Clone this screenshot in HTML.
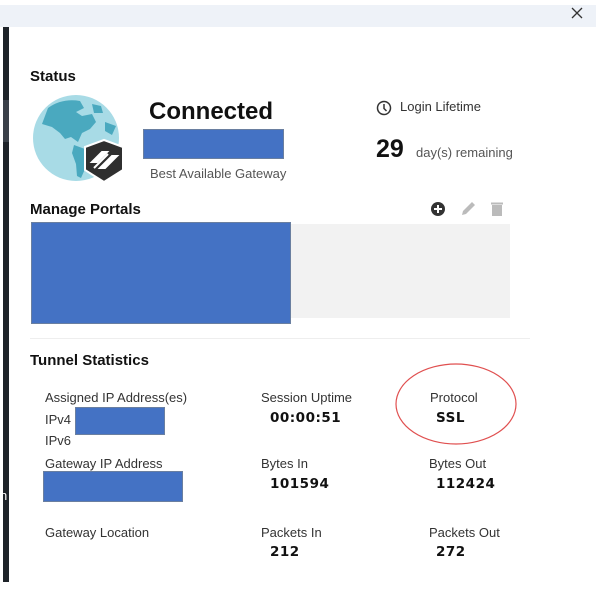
<!DOCTYPE html>
<html><head><meta charset="utf-8">
<style>
html,body{margin:0;padding:0;background:#fff;}
body{width:602px;height:589px;position:relative;overflow:hidden;font-family:"Liberation Sans",sans-serif;color:#222;}
.a{position:absolute;white-space:nowrap;}
.h{font-weight:bold;font-size:15px;color:#111;}
.l{font-size:13px;color:#333;}
.v{font-size:13.5px;font-weight:bold;color:#111;font-family:"DejaVu Sans",sans-serif;letter-spacing:0.5px;}
.blue{position:absolute;background:#4472c4;border:1px solid #6a7fa0;box-sizing:border-box;}
</style></head><body>
<div class="a" style="left:0;top:5px;width:596px;height:22px;background:#eef2f8;"></div>
<svg class="a" style="left:571px;top:7px" width="12" height="12"><path d="M1 1L11 11M11 1L1 11" stroke="#333" stroke-width="1.3"/></svg>
<div class="a" style="left:3px;top:27px;width:6px;height:555px;background:#1e2329;"></div>
<div class="a" style="left:3px;top:100px;width:6px;height:42px;background:#3a4048;"></div>

<div class="a h" style="left:30px;top:68px;">Status</div>
<svg class="a" style="left:30px;top:92px" width="96" height="96" viewBox="0 0 96 96">
<circle cx="46" cy="46" r="43" fill="#a8dbe6"/>
<path d="M18 16 Q32 6 50 9 L54 16 L46 20 L52 24 L62 22 L66 30 L60 37 L52 41 L48 50 L41 45 L35 47 L30 41 L22 35 L12 32 Z" fill="#4aa9bf"/>
<path d="M44 53 L55 57 L59 67 L55 77 L51 86 L47 84 L46 72 L42 61 Z" fill="#4aa9bf"/>
<path d="M62 12 L71 14 L73 21 L64 21 Z" fill="#4aa9bf"/>
<path d="M75 30 L86 34 L82 43 L75 39 Z" fill="#4aa9bf"/>
<path d="M74 48 L93 55 L93 78 L74 90 L55 78 L55 55 Z" fill="#2f2f2f" stroke="#fff" stroke-width="2"/>
<path d="M62 70 L72 60 L77 60 L67 70 Z M70 76 L82 64 L87 64 L75 76 Z M64 76 L78 62" fill="#fff" stroke="#fff" stroke-width="2"/>
</svg>
<div class="a" style="left:149px;top:98px;font-size:24px;font-weight:bold;color:#111;">Connected</div>
<div class="blue" style="left:143px;top:129px;width:141px;height:30px;"></div>
<div class="a l" style="left:150px;top:166px;color:#555;">Best Available Gateway</div>

<svg class="a" style="left:376px;top:100px" width="16" height="16" viewBox="0 0 16 16"><circle cx="8" cy="8" r="6.5" fill="none" stroke="#333" stroke-width="1.5"/><path d="M8 4 V8.5 L10.5 11" fill="none" stroke="#333" stroke-width="1.5"/></svg>
<div class="a l" style="left:400px;top:99px;">Login Lifetime</div>
<div class="a" style="left:376px;top:135px;font-size:25px;font-weight:bold;color:#111;">29</div>
<div class="a l" style="left:416px;top:145px;color:#555;">day(s) remaining</div>

<div class="a h" style="left:30px;top:201px;">Manage Portals</div>
<svg class="a" style="left:430px;top:201px" width="80" height="16" viewBox="0 0 80 16">
<circle cx="8" cy="8" r="7" fill="#333"/><path d="M8 4V12M4 8H12" stroke="#fff" stroke-width="2"/>
<path d="M32 14 L33 10 L42 1 L45 4 L36 13 Z" fill="#bbb"/>
<rect x="62" y="4" width="10" height="11" fill="#bbb"/><rect x="61" y="1.5" width="12" height="2" fill="#bbb"/>
</svg>
<div class="a" style="left:291px;top:224px;width:219px;height:94px;background:#f2f2f2;"></div>
<div class="blue" style="left:31px;top:222px;width:260px;height:102px;"></div>
<div class="a" style="left:30px;top:338px;width:500px;height:1px;background:#eee;"></div>

<div class="a h" style="left:30px;top:352px;">Tunnel Statistics</div>
<div class="a l" style="left:45px;top:390px;">Assigned IP Address(es)</div>
<div class="a l" style="left:45px;top:412px;">IPv4</div>
<div class="blue" style="left:75px;top:407px;width:90px;height:28px;"></div>
<div class="a l" style="left:45px;top:433px;">IPv6</div>
<div class="a l" style="left:45px;top:456px;">Gateway IP Address</div>
<div class="blue" style="left:43px;top:471px;width:140px;height:31px;"></div>
<div class="a l" style="left:45px;top:525px;">Gateway Location</div>

<div class="a l" style="left:261px;top:390px;">Session Uptime</div>
<div class="a v" style="left:270px;top:410px;">00:00:51</div>
<div class="a l" style="left:261px;top:456px;">Bytes In</div>
<div class="a v" style="left:270px;top:476px;">101594</div>
<div class="a l" style="left:261px;top:525px;">Packets In</div>
<div class="a v" style="left:270px;top:544px;">212</div>

<div class="a l" style="left:430px;top:390px;">Protocol</div>
<div class="a v" style="left:436px;top:410px;">SSL</div>
<div class="a l" style="left:429px;top:456px;">Bytes Out</div>
<div class="a v" style="left:436px;top:476px;">112424</div>
<div class="a l" style="left:429px;top:525px;">Packets Out</div>
<div class="a v" style="left:436px;top:544px;">272</div>
<svg class="a" style="left:394px;top:362px" width="126" height="86"><ellipse cx="62" cy="42" rx="60" ry="40" fill="none" stroke="#e05050" stroke-width="1.2"/></svg>
<div class="a" style="left:0;top:488px;font-size:13px;color:#fff;">n</div>
</body></html>
